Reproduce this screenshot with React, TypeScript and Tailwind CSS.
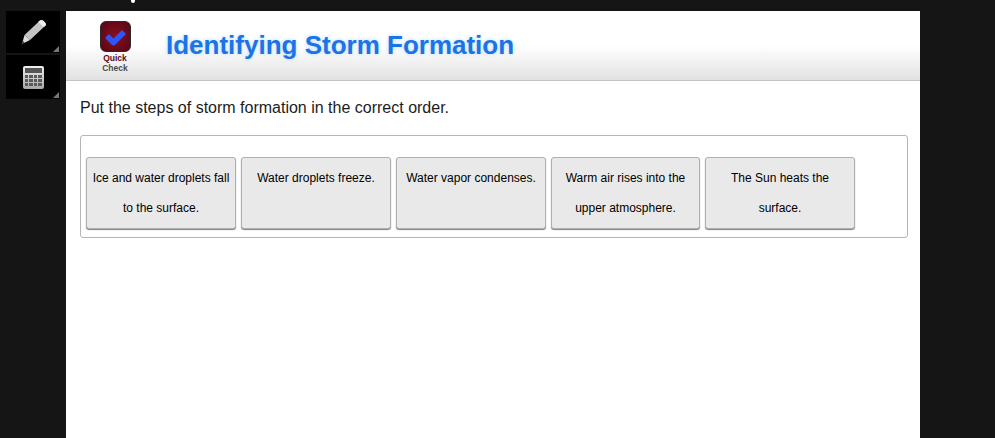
import React from "react";

const cards = [
  { text: "Ice and water droplets fall to the surface.", width: "w-[150px]" },
  { text: "Water droplets freeze.", width: "w-[150px]" },
  { text: "Water vapor condenses.", width: "w-[150px]" },
  { text: "Warm air rises into the upper atmosphere.", width: "w-[149px]" },
  { text: "The Sun heats the surface.", width: "w-[150px]" },
];

function PencilIcon() {
  return (
    <svg width="30" height="30" viewBox="0 0 30 30">
      <path d="M22 3.5 Q23.5 2.5 25 3.5 L27.5 6 Q28.5 7.5 27.5 8.5 L12 23 L6.5 18 Z" fill="#c4c4c4" />
      <path d="M22 3.5 Q23.5 2.5 25 3.5 L27.5 6 Q28.5 7.5 27.5 8.5 L26 10 L20 5 Z" fill="#ececec" />
      <path d="M6.5 18 L12 23 L4 27 Z" fill="#dcdcdc" />
      <path d="M4.8 23.8 L6.5 25.5 L3.5 27.5 Z" fill="#3a3a3a" />
    </svg>
  );
}

function CalculatorIcon() {
  const keys = Array.from({ length: 12 });
  return (
    <div className="flex h-[23px] w-[21px] flex-col gap-[2px] rounded-[2px] bg-gradient-to-b from-[#f0f0f0] to-[#a8a8a8] p-[2px]">
      <div className="h-[5px] bg-[#555555]" />
      <div className="grid grid-cols-4 gap-[1px]">
        {keys.map((_, i) => (
          <div key={i} className="h-[3px] bg-[#5a5a5a]" />
        ))}
      </div>
    </div>
  );
}

function ToolButton({ children, height }: { children: React.ReactNode; height: string }) {
  return (
    <div className={`relative flex ${height} w-[54px] items-center justify-center bg-black`}>
      {children}
      <div className="absolute bottom-[1px] right-[1px] h-0 w-0 border-b-[6px] border-l-[6px] border-b-[#777777] border-l-transparent" />
    </div>
  );
}

function QuickCheckLogo() {
  return (
    <div className="flex w-[40px] flex-col items-center">
      <div className="flex h-[31px] w-[31px] items-center justify-center rounded-[6px] border border-[#2a2a2a] bg-[radial-gradient(circle,#8a0f22,#560612)]">
        <svg width="25" height="20" viewBox="0 0 25 20">
          <path d="M4 9 L10.5 15.5 L21 5" fill="none" stroke="#2f55f5" strokeWidth="5.5" strokeLinejoin="round" />
        </svg>
      </div>
      <div className="mt-[1px] text-[8.5px] font-bold leading-[10px] text-[#5f0a18]">Quick</div>
      <div className="text-[8.5px] font-bold leading-[10px] text-[#4a4a4a]">Check</div>
    </div>
  );
}

export default function App() {
  return (
    <div className="relative flex h-[438px] w-[995px] items-stretch overflow-hidden bg-[#151515] font-['Liberation_Sans',Arial,sans-serif]">
      <div className="absolute left-[131px] top-0 h-[3px] w-[4px] rounded-b-[2px] bg-white" />
      <div className="flex w-[66px] shrink-0 flex-col gap-[2px] pl-[6px] pt-[11px]">
        <ToolButton height="h-[42px]">
          <PencilIcon />
        </ToolButton>
        <ToolButton height="h-[44px]">
          <CalculatorIcon />
        </ToolButton>
      </div>
      <div className="mt-[11px] w-[854px] shrink-0 bg-white">
        <div className="flex h-[70px] items-start border-b border-[#c4c4c4] bg-gradient-to-b from-white from-50% to-[#e2e2e2] pl-[29px] pt-[10px]">
          <QuickCheckLogo />
          <h1 className="ml-[31px] mt-[9px] text-[26px] font-bold leading-[30px] text-[#1a73e8] [text-shadow:0_0_4px_#b8dcff,0_0_2px_#fff7d0]">
            Identifying Storm Formation
          </h1>
        </div>
        <div className="px-[14px] pt-[16px]">
          <p className="text-[16px] leading-[22px] text-[#1c1c1c]">
            Put the steps of storm formation in the correct order.
          </p>
          <div className="mt-[16px] flex h-[103px] w-[828px] gap-[5px] rounded-[3px] border border-[#b5b5b5] pl-[5px] pt-[21px]">
            {cards.map((card) => (
              <div
                key={card.text}
                className={`${card.width} h-[72px] shrink-0 rounded-[3px] border border-[#b0b0b0] bg-[#e9e9e9] px-[5px] text-center text-[12px] leading-[30px] text-black shadow-[0_1px_1px_#808080]`}
              >
                <div className="pt-[5px]">{card.text}</div>
              </div>
            ))}
          </div>
        </div>
      </div>
    </div>
  );
}
